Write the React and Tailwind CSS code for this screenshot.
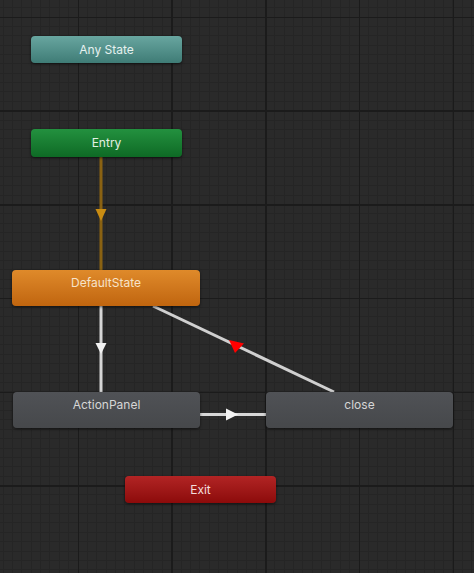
import React from "react";

const MAJOR = 93.7;
const MINOR = MAJOR / 10;

function Grid() {
  const lines = [];
  // minor lines
  for (let i = 0; i < 60; i++) {
    const x = 3.04 + i * MINOR;
    if (x > 474) break;
    lines.push(<line key={"mx" + i} x1={x} y1={0} x2={x} y2={573} stroke="#252525" strokeWidth="1" />);
  }
  for (let i = 0; i < 70; i++) {
    const y = 7.63 + i * MINOR;
    if (y > 573) break;
    lines.push(<line key={"my" + i} x1={0} y1={y} x2={474} y2={y} stroke="#252525" strokeWidth="1" />);
  }
  // major lines
  for (let i = 0; i < 6; i++) {
    const x = 78.5 + i * MAJOR;
    lines.push(<line key={"Mx" + i} x1={x} y1={0} x2={x} y2={573} stroke="#1b1b1b" strokeWidth="1.5" />);
  }
  for (let i = 0; i < 7; i++) {
    const y = 17.5 + i * MAJOR;
    lines.push(<line key={"My" + i} x1={0} y1={y} x2={474} y2={y} stroke="#1b1b1b" strokeWidth="1.5" />);
  }
  return <g shapeRendering="crispEdges">{lines}</g>;
}

function Edges() {
  return (
    <g>
      {/* Entry -> DefaultState */}
      <line x1="101" y1="157" x2="101" y2="270" stroke="#8a6212" strokeWidth="3" />
      <polygon points="95.5,209 106.5,209 101,221" fill="#c98c12" />

      {/* DefaultState -> ActionPanel */}
      <line x1="101" y1="306" x2="101" y2="392" stroke="#d6d6d6" strokeWidth="3" />
      <polygon points="95.5,343 106.5,343 101,354" fill="#f2f2f2" />

      {/* ActionPanel -> close */}
      <line x1="200" y1="414.5" x2="266" y2="414.5" stroke="#d6d6d6" strokeWidth="3" />
      <polygon points="226,408.5 226,420.5 238,414.5" fill="#f2f2f2" />

      {/* close -> DefaultState (selected) */}
      <line x1="153" y1="306" x2="334" y2="392" stroke="#d0d0d0" strokeWidth="3" />
      <polygon points="229,340 244,343.5 235,353" fill="#ff0000" />
    </g>
  );
}

function Node({ left, top, width, height, className, textClass, label, alignTop }) {
  return (
    <div
      className={`absolute flex justify-center rounded-[4px] shadow-[0_1px_3px_rgba(0,0,0,0.6)] ${alignTop ? "items-start pt-[6px]" : "items-center"} ${className}`}
      style={{ left, top, width, height }}
    >
      <span className={`text-[12px] leading-[14px] font-['Inter',sans-serif] ${textClass}`}>{label}</span>
    </div>
  );
}

export default function App() {
  return (
    <div className="relative w-[474px] h-[573px] overflow-hidden bg-[#2a2a2a]">
      <svg className="absolute inset-0" width="474" height="573">
        <Grid />
        <Edges />
      </svg>

      <Node
        left={31}
        top={36}
        width={151}
        height={27}
        label="Any State"
        className="bg-gradient-to-b from-[#68a6a0] to-[#3f7c76]"
        textClass="text-[#e6f1ef]"
      />
      <Node
        left={31}
        top={129}
        width={151}
        height={28}
        label="Entry"
        className="bg-gradient-to-b from-[#23913f] to-[#0e6a25]"
        textClass="text-[#e4f1e4]"
      />
      <Node
        left={12}
        top={270}
        width={188}
        height={36}
        label="DefaultState"
        alignTop
        className="bg-gradient-to-b from-[#df8a2a] to-[#c0650e]"
        textClass="text-[#f7e3c9]"
      />
      <Node
        left={13}
        top={392}
        width={187}
        height={36}
        label="ActionPanel"
        alignTop
        className="bg-gradient-to-b from-[#505256] to-[#46484b]"
        textClass="text-[#d6d6d6]"
      />
      <Node
        left={266}
        top={392}
        width={187}
        height={36}
        label="close"
        alignTop
        className="bg-gradient-to-b from-[#505256] to-[#46484b]"
        textClass="text-[#d6d6d6]"
      />
      <Node
        left={125}
        top={476}
        width={151}
        height={27}
        label="Exit"
        className="bg-gradient-to-b from-[#b22424] to-[#8c0a0a]"
        textClass="text-[#f4dede]"
      />
    </div>
  );
}
